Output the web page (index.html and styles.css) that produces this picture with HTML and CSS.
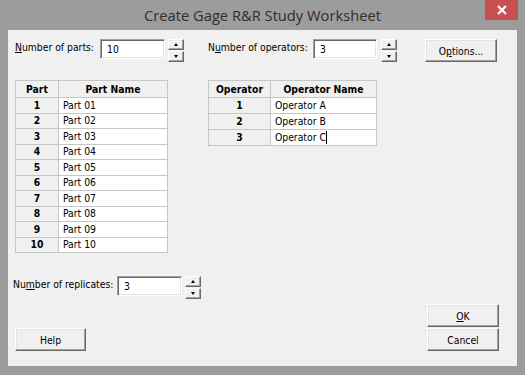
FILE: index.html
```html
<!DOCTYPE html>
<html>
<head>
<meta charset="utf-8">
<link rel="stylesheet" href="styles.css">
</head>
<body>
<div class="window">
  <div class="titlebar">
    <span class="title">Create Gage R&amp;R Study Worksheet</span>
    <span class="close"><svg width="10" height="10" viewBox="0 0 10 10"><path d="M1 1L9 9M9 1L1 9" stroke="#fff" stroke-width="2.2" fill="none"/></svg></span>
  </div>
  <div class="client">
    <div class="toprow">
      <label class="lbl lbl-parts"><u>N</u>umber of parts:</label>
      <div class="field w65">10</div>
      <div class="spin"><span class="sb"><i class="up"></i></span><span class="sb"><i class="down"></i></span></div>
      <label class="lbl lbl-ops">N<u>u</u>mber of operators:</label>
      <div class="field w64">3</div>
      <div class="spin spin-ops"><span class="sb"><i class="up"></i></span><span class="sb"><i class="down"></i></span></div>
      <button class="btn btn-options">O<u>p</u>tions...</button>
    </div>
    <div class="tables">
      <table class="grid parts">
        <tr class="hdr"><th class="c1">Part</th><th>Part Name</th></tr>
        <tr><td class="rh">1</td><td>Part 01</td></tr>
        <tr><td class="rh">2</td><td>Part 02</td></tr>
        <tr><td class="rh">3</td><td>Part 03</td></tr>
        <tr><td class="rh">4</td><td>Part 04</td></tr>
        <tr><td class="rh">5</td><td>Part 05</td></tr>
        <tr><td class="rh">6</td><td>Part 06</td></tr>
        <tr><td class="rh">7</td><td>Part 07</td></tr>
        <tr><td class="rh">8</td><td>Part 08</td></tr>
        <tr><td class="rh">9</td><td>Part 09</td></tr>
        <tr><td class="rh">10</td><td>Part 10</td></tr>
      </table>
      <table class="grid ops">
        <tr class="hdr"><th class="c1">Operator</th><th>Operator Name</th></tr>
        <tr><td class="rh">1</td><td>Operator A</td></tr>
        <tr><td class="rh">2</td><td>Operator B</td></tr>
        <tr><td class="rh">3</td><td>Operator C<span class="caret"></span></td></tr>
      </table>
    </div>
    <div class="reprow">
      <label class="lbl lbl-rep">Nu<u>m</u>ber of replicates:</label>
      <div class="field w65">3</div>
      <div class="spin"><span class="sb"><i class="up"></i></span><span class="sb"><i class="down"></i></span></div>
    </div>
    <div class="footer">
      <button class="btn btn-help">Help</button>
      <div class="okcancel">
        <button class="btn btn-ok"><u>O</u>K</button>
        <button class="btn btn-cancel">Cancel</button>
      </div>
    </div>
  </div>
</div>
</body>
</html>
```

FILE: styles.css
```css
html, body {
  margin: 0;
  padding: 0;
  background: #9c9c9c;
}
.window {
  width: 525px;
  height: 375px;
  background: #9c9c9c;
  display: flex;
  flex-direction: column;
  box-sizing: border-box;
  position: relative;
  font-family: "DejaVu Sans", sans-serif;
  font-stretch: condensed;
  font-size: 10.3px;
  color: #000;
}
.titlebar {
  height: 30px;
  display: flex;
  align-items: center;
  justify-content: center;
  flex: none;
}
.title {
  font-family: "Open Sans", "Noto Sans", sans-serif;
  font-stretch: normal;
  font-size: 14.7px;
  color: #2e2e2e;
  margin-top: -1px;
}
.close {
  position: absolute;
  top: 0;
  left: 485px;
  width: 33px;
  height: 20px;
  background: #c75050;
  display: flex;
  align-items: center;
  justify-content: center;
}
.client {
  flex: 1;
  margin: 0 8px 9px 8px;
  background: #f0f0f0;
  display: flex;
  flex-direction: column;
  padding: 9px 0 15px 7px;
  box-sizing: border-box;
}
.toprow, .reprow {
  display: flex;
  align-items: flex-start;
  height: 23px;
}
.lbl {
  display: block;
  line-height: 17px;
  white-space: nowrap;
  flex: none;
}
.lbl-parts { width: 85px; }
.lbl-ops { width: 105px; margin-left: 24px; }
.lbl-rep { width: 104px; margin-left: -2px; }
.field {
  height: 20px;
  box-sizing: border-box;
  background: #fff;
  border: 1px solid;
  border-color: #a0a0a0 #ffffff #ffffff #a0a0a0;
  box-shadow: inset 1px 1px 0 #696969, inset -1px -1px 0 #e3e3e3;
  padding: 2px 0 0 6px;
  line-height: 15px;
  flex: none;
}
.w65 { width: 65px; }
.w64 { width: 64px; }
.spin {
  width: 16px;
  height: 23px;
  margin-left: 3px;
  display: flex;
  flex-direction: column;
  justify-content: space-between;
  flex: none;
}
.spin-ops { margin-left: 4px; }
.sb {
  height: 11px;
  box-sizing: border-box;
  background: #f0f0f0;
  border: 1px solid;
  border-color: #ffffff #696969 #696969 #ffffff;
  box-shadow: inset -1px -1px 0 #a0a0a0;
  display: flex;
  align-items: center;
  justify-content: center;
}
.sb i {
  display: block;
  width: 0;
  height: 0;
  border-left: 2.5px solid transparent;
  border-right: 2.5px solid transparent;
}
.sb i.up { border-bottom: 3px solid #000; margin-top: -1px; }
.sb i.down { border-top: 3px solid #000; }
.btn {
  font: inherit;
  font-stretch: condensed;
  color: #000;
  background: #f0f0f0;
  border: 1px solid;
  border-color: #ffffff #696969 #696969 #ffffff;
  box-shadow: inset -1px -1px 0 #a0a0a0, inset 1px 1px 0 #e3e3e3;
  padding: 0;
  box-sizing: border-box;
  height: 23px;
  width: 72px;
  flex: none;
}
.btn-options { margin-left: 28px; }
.tables {
  display: flex;
  align-items: flex-start;
  margin-top: 18px;
}
.grid {
  border-collapse: collapse;
  border: 1px solid #9a9a9a;
  table-layout: fixed;
  flex: none;
}
.grid th, .grid td {
  border: 1px solid #c6c6c6;
  padding: 0;
  font-size: 10.3px;
  line-height: 13px;
  white-space: nowrap;
  overflow: hidden;
}
.grid th {
  background: #f0f0f0;
  font-weight: bold;
  text-align: center;
  height: 16px;
}
.grid td {
  background: #fff;
  padding-left: 4px;
}
.grid td.rh {
  background: #f0f0f0;
  font-weight: bold;
  text-align: center;
  padding-left: 0;
}
.parts { width: 153px; }
.parts th.c1 { width: 42px; }
.parts td { height: 14.5px; }
.ops { width: 169px; margin-left: 40px; }
.ops th.c1 { width: 61px; }
.ops td { height: 15px; }
.caret {
  display: inline-block;
  width: 1px;
  height: 13px;
  background: #000;
  vertical-align: -3px;
}
.reprow {
  margin-top: 23px;
}
.footer {
  margin-top: auto;
  display: flex;
  justify-content: space-between;
  align-items: flex-end;
  padding-right: 18px;
}
.btn-help { width: 71px; }
.okcancel {
  display: flex;
  flex-direction: column;
  gap: 1px;
}
.btn-ok, .btn-cancel { width: 72px; }
```
